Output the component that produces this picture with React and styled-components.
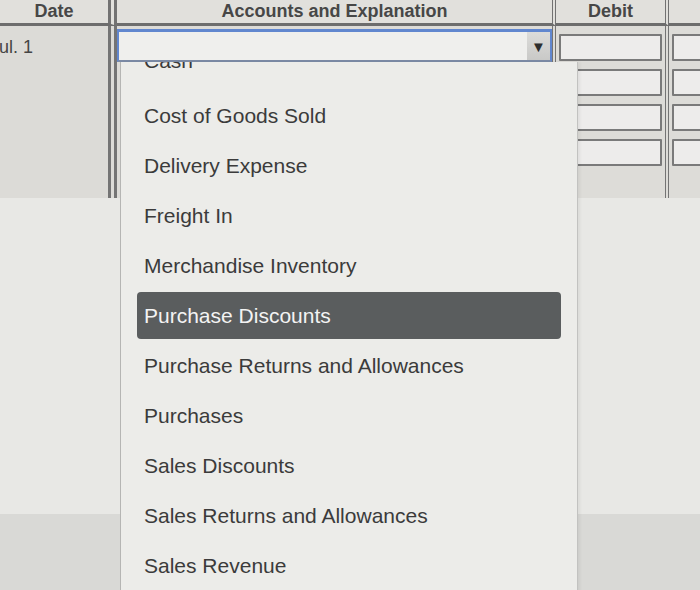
import React from "react";
import styled, { createGlobalStyle, css } from "styled-components";

const GlobalStyle = createGlobalStyle`
  html, body {
    margin: 0;
    padding: 0;
    background: #e7e7e4;
  }
  body {
    font-family: "Liberation Sans", Arial, Helvetica, sans-serif;
  }
`;

const PageUI = styled.div`
  position: relative;
  width: 700px;
  height: 590px;
  overflow: hidden;
  display: flex;
  flex-direction: column;
  background: #e8e8e5;
`;

const RowUI = styled.div`
  display: grid;
  grid-template-columns: 117px 439px 113px 120px;
`;

const HeadCellUI = styled.div`
  box-sizing: border-box;
  height: 26px;
  background: #e1e0dc;
  border-bottom: 3px solid #6d6d6d;
  border-right: ${(p) => (p.wide ? "9px" : "4px")} double #727272;
  font: 700 18px/22px "Liberation Sans", Arial, sans-serif;
  color: #474747;
  text-align: center;
  white-space: nowrap;
  overflow: hidden;
  ${(p) =>
    p.last &&
    css`
      border-right: none;
    `}
`;

const BodyCellUI = styled.div`
  box-sizing: border-box;
  height: 172px;
  background: #dcdbd7;
  border-right: ${(p) => (p.wide ? "9px" : "4px")} double #747474;
  ${(p) =>
    p.last &&
    css`
      border-right: none;
    `}
`;

const DateTextUI = styled.div`
  padding-top: 11px;
  font: 400 18px/20px "Liberation Sans", Arial, sans-serif;
  color: #454545;
  text-indent: -10px;
  white-space: nowrap;
`;

const SelectUI = styled.div`
  box-sizing: border-box;
  margin-top: 3px;
  height: 33px;
  display: flex;
  justify-content: flex-end;
  background: #efefed;
  border: 2px solid #6187cf;
  border-top-width: 3px;
  border-bottom: 2px solid #7c8ba6;
`;

const ArrowUI = styled.div`
  width: 23px;
  display: flex;
  align-items: center;
  justify-content: center;
  background: linear-gradient(#dcdcda, #c9c9c7);
  color: #2e2e2e;
  font-size: 15px;
`;

const AmountColUI = styled(BodyCellUI)`
  display: flex;
  flex-direction: column;
  gap: 8px;
  padding: 8px 3px 0 3px;
  background: #dddcd8;
`;

const InputUI = styled.div`
  box-sizing: border-box;
  height: 27px;
  background: #edeceb;
  border: 2px solid #7a7a7a;
  border-radius: 1px;
`;

const FillUI = styled.div`
  flex: 1;
`;

const BottomBandUI = styled.div`
  height: 76px;
  background: #d9d9d6;
`;

const DropdownUI = styled.div`
  position: absolute;
  top: 62px;
  left: 120px;
  width: 458px;
  height: 560px;
  box-sizing: border-box;
  background: #ecece9;
  border-left: 1px solid #b5b5b3;
  border-right: 1px solid #c2c2c0;
  box-shadow: 2px 0 3px rgba(0, 0, 0, 0.06);
  overflow: hidden;
`;

const ListUI = styled.ul`
  list-style: none;
  margin: -25px 0 0 0;
  padding: 0 16px;
  display: flex;
  flex-direction: column;
  gap: 3px;
`;

const ItemUI = styled.li`
  height: 47px;
  display: flex;
  align-items: center;
  padding-left: 7px;
  border-radius: 4px;
  font: 400 21px/1 "Liberation Sans", Arial, sans-serif;
  color: #3b3b3b;
  white-space: nowrap;
  ${(p) =>
    p.first &&
    css`
      margin-bottom: 5px;
    `}
  ${(p) =>
    p.selected &&
    css`
      background: #5a5d5e;
      color: #f3f3f3;
    `}
`;

const accounts = [
  "Cash",
  "Cost of Goods Sold",
  "Delivery Expense",
  "Freight In",
  "Merchandise Inventory",
  "Purchase Discounts",
  "Purchase Returns and Allowances",
  "Purchases",
  "Sales Discounts",
  "Sales Returns and Allowances",
  "Sales Revenue",
];

const inputRows = [0, 1, 2, 3];

const App = () => {
  return (
    <>
      <GlobalStyle />
      <PageUI>
        <RowUI>
          <HeadCellUI wide>Date</HeadCellUI>
          <HeadCellUI>Accounts and Explanation</HeadCellUI>
          <HeadCellUI>Debit</HeadCellUI>
          <HeadCellUI last />
        </RowUI>
        <RowUI>
          <BodyCellUI wide>
            <DateTextUI>Jul. 1</DateTextUI>
          </BodyCellUI>
          <BodyCellUI>
            <SelectUI>
              <ArrowUI>▼</ArrowUI>
            </SelectUI>
          </BodyCellUI>
          <AmountColUI>
            {inputRows.map((r) => (
              <InputUI key={r} />
            ))}
          </AmountColUI>
          <AmountColUI last>
            {inputRows.map((r) => (
              <InputUI key={r} />
            ))}
          </AmountColUI>
        </RowUI>
        <FillUI />
        <BottomBandUI />
        <DropdownUI>
          <ListUI>
            {accounts.map((name, i) => (
              <ItemUI
                key={name}
                first={i === 0}
                selected={name === "Purchase Discounts"}
              >
                {name}
              </ItemUI>
            ))}
          </ListUI>
        </DropdownUI>
      </PageUI>
    </>
  );
};

export default App;
